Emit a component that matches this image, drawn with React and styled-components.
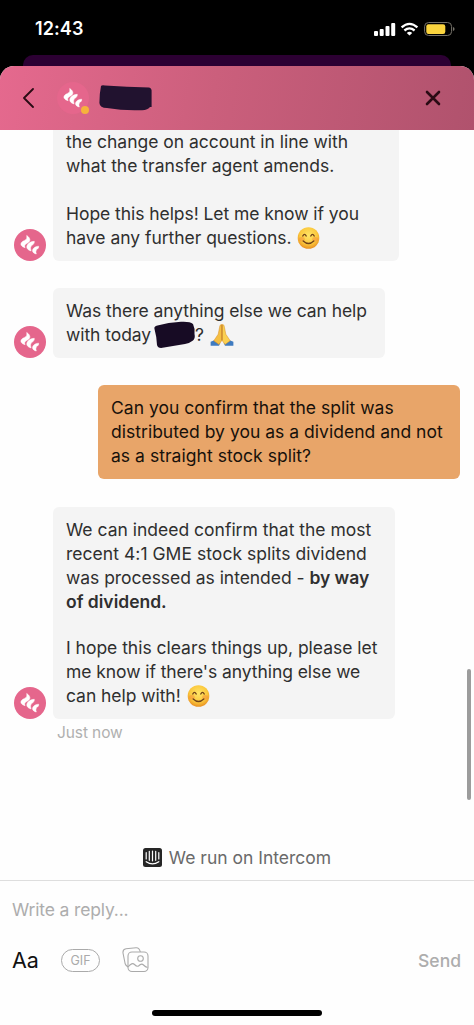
import React from 'react';
import styled, { createGlobalStyle } from 'styled-components';

const GlobalStyle = createGlobalStyle`
    * {
        box-sizing: border-box;
    }
    body {
        margin: 0;
        background: #000;
        font-family: Inter, "Liberation Sans", sans-serif;
    }
`;

const Phone = styled.div`
    display: flex;
    flex-direction: column;
    width: 474px;
    height: 1025px;
    overflow: hidden;
    background: #000;
`;

const StatusBar = styled.div`
    display: flex;
    justify-content: space-between;
    align-items: center;
    height: 55px;
    padding: 2px 19px 0 35px;
    color: #fff;
`;

const Clock = styled.span`
    font-size: 18px;
    font-weight: 600;
    letter-spacing: 0.1px;
`;

const StatusIcons = styled.svg`
    display: block;
`;

const BackSheet = styled.div`
    height: 11px;
    margin: 0 23px;
    border-radius: 10px 10px 0 0;
    background: #2c0033;
`;

const Sheet = styled.div`
    display: flex;
    flex-direction: column;
    flex: 1;
    min-height: 0;
    border-radius: 14px 14px 0 0;
    overflow: hidden;
    background: #fefefe;
`;

const Header = styled.div`
    display: flex;
    align-items: center;
    height: 64px;
    padding: 0 33px 0 22px;
    background: linear-gradient(100deg, #e5698e 0%, #cb5f7c 45%, #b0526d 100%);
`;

const HeaderAvatar = styled.div`
    position: relative;
    width: 32px;
    height: 32px;
    margin: 0 9px 0 21px;
`;

const OnlineDot = styled.span`
    position: absolute;
    right: 0;
    bottom: 0;
    width: 8px;
    height: 8px;
    border-radius: 50%;
    background: #f6b23c;
`;

const Spacer = styled.div`
    flex: 1;
`;

const Conversation = styled.div`
    position: relative;
    display: flex;
    flex-direction: column;
    height: 751px;
    border-bottom: 1px solid #dedede;
`;

const Row = styled.div`
    display: flex;
    align-items: flex-end;
    gap: 7px;
    justify-content: ${({ $mine }) => ($mine ? 'flex-end' : 'flex-start')};
    padding: 0 14px;
    margin-bottom: ${({ $gap }) => $gap || 27}px;
`;

const Bubble = styled.div`
    width: ${({ $width }) => $width}px;
    padding: ${({ $cut }) => ($cut ? '0 13px 11px' : '11px 13px')};
    border-radius: ${({ $cut }) => ($cut ? '0 0 6px 6px' : '6px')};
    background: ${({ $mine }) => ($mine ? '#e8a569' : '#f4f4f4')};
    color: ${({ $mine }) => ($mine ? '#17110b' : '#2f2f2f')};
    font-size: 17.5px;
    line-height: 24px;
`;

const Line = styled.div`
    display: flex;
    align-items: center;
    height: 24px;
    white-space: pre;
    letter-spacing: ${({ $ls }) => $ls || 0}px;
`;

const Blank = styled.div`
    height: ${({ $h }) => $h}px;
`;

const Strong = styled.b`
    font-weight: 600;
`;

const Time = styled.div`
    padding-left: 57px;
    color: #b0b0b0;
    font-size: 15.5px;
    letter-spacing: -0.1px;
    line-height: 20px;
`;

const Scrollbar = styled.div`
    position: absolute;
    right: 3px;
    top: 539px;
    width: 4px;
    height: 131px;
    border-radius: 2px;
    background: #9c9c9c;
`;

const Branding = styled.div`
    display: flex;
    justify-content: center;
    align-items: center;
    gap: 7px;
    margin-top: auto;
    height: 46px;
    color: #6a6a6a;
    font-size: 17.5px;
`;

const Composer = styled.div`
    display: flex;
    flex-direction: column;
    flex: 1;
    padding: 17px 12px 0;
`;

const Placeholder = styled.div`
    color: #adadad;
    font-size: 17.5px;
    letter-spacing: -0.15px;
    line-height: 24px;
`;

const Toolbar = styled.div`
    display: flex;
    align-items: center;
    height: 40px;
    margin-top: 18px;
`;

const TextStyle = styled.span`
    width: 49px;
    color: #111;
    font-size: 21.5px;
`;

const Gif = styled.span`
    display: flex;
    align-items: center;
    justify-content: center;
    width: 39px;
    height: 23px;
    margin-right: 22px;
    border: 1px solid #aaa;
    border-radius: 12px;
    color: #aaa;
    font-size: 12.5px;
`;

const Send = styled.span`
    padding-right: 1px;
    color: #adadad;
    font-size: 17.5px;
    font-weight: 500;
`;

const HomeBar = styled.div`
    width: 170px;
    height: 6px;
    margin: 30px auto 0;
    border-radius: 3px;
    background: #000;
`;

const Logo = ({ color }) => (
    <svg width="32" height="32" viewBox="0 0 32 32">
        <circle cx="16" cy="16" r="16" fill={color} />
        <g fill="#fff" stroke="#fff" strokeWidth="0.5" strokeLinejoin="round">
            <path d="M12.700 6.500C15.500 8.200 17 11 14.900 13C13.300 14.500 11.200 15 10.800 16.300Q10.500 17.300 11.100 18.700C7.500 17.800 6.200 15.600 7.300 13.700C8.500 11.700 12 11.500 12.700 9.400Q13 8.200 12.700 6.500z" />
            <path d="M20.300 12.300Q20.700 14.900 18.700 15.800C16.500 17 16.100 18.800 17.100 21.900C13.200 21 12 18.400 13.300 16C14.600 13.700 17.200 12.500 20.300 12.300z" />
            <path d="M24.700 17.200Q24.900 19.300 23.400 20.100C21.700 21.100 21.600 22.600 22.300 25C18.900 24.200 17.900 22.100 18.900 20.200C20 18.200 22.200 17.300 24.700 17.200z" />
        </g>
    </svg>
);

const EmojiSvg = styled.svg`
    flex: none;
    margin-left: ${({ $left }) => $left || 0}px;
`;

const Smile = () => (
    <EmojiSvg $left={1} width="23" height="23" viewBox="0 0 23 23">
        <defs>
            <radialGradient id="face" cx="50%" cy="38%" r="62%">
                <stop offset="0" stopColor="#ffe566" />
                <stop offset="0.65" stopColor="#fbc83d" />
                <stop offset="1" stopColor="#e99021" />
            </radialGradient>
        </defs>
        <circle cx="11.500" cy="11" r="10.800" fill="url(#face)" />
        <ellipse cx="4.800" cy="12.300" rx="3" ry="2.200" fill="#f58a3c" opacity="0.45" />
        <ellipse cx="18.200" cy="12.300" rx="3" ry="2.200" fill="#f58a3c" opacity="0.45" />
        <g fill="none" stroke="#70421a" strokeWidth="1.400" strokeLinecap="round">
            <path d="M5.800 9q1.700-3.200 3.400 0" />
            <path d="M13.800 9q1.700-3.200 3.400 0" />
            <path d="M6.200 13.900q5.300 5 10.600 0" />
        </g>
    </EmojiSvg>
);

const Pray = () => (
    <EmojiSvg $left={1} width="24" height="24" viewBox="0 0 24 24">
        <path d="M.6 18.800l5-2l4.700 3.300l-1.300 2.700H.6z" fill="#3f7bc0" />
        <path d="M23.400 18.800l-5-2l-4.700 3.300l1.300 2.700h8.400z" fill="#3f7bc0" />
        <path d="M11.800 1.500c-1.400-.3-2 1-2.200 2.700l-1.400 7l-4.400 6.600l5.200 3.700l2.800-4z" fill="#f5bf42" stroke="#d88d20" strokeWidth=".5" />
        <path d="M12.200 1.500c1.400-.3 2 1 2.200 2.700l1.400 7l4.400 6.600l-5.200 3.700l-2.800-4z" fill="#fbd051" stroke="#d88d20" strokeWidth=".5" />
        <path d="M12 2v15.500" stroke="#b87016" strokeWidth=".8" />
    </EmojiSvg>
);

const NameScribble = () => (
    <svg width="55" height="28" viewBox="0 0 55 28">
        <path d="M3 2Q4 .8 7 1.500L29 2.800L51 3.500Q54 4 53.600 8V23H52Q50 26 44 26.200Q26 27 9 24Q1.800 24 1.400 19Q1.500 9 3 2z" fill="#21122f" />
    </svg>
);

// sits over the text, so it is pulled into the surrounding spaces
const InlineScribble = styled.svg`
    flex: none;
    margin: 0 -2px 0 -3px;
`;

const RedactedName = () => (
    <InlineScribble width="44" height="28" viewBox="0 0 44 28">
        <path d="M1.500 8Q.5 5.500 4.500 4.500Q15 1.500 28 .8Q37 .3 40 3Q42 7 41.500 13Q42.500 17 40 19.500Q37 22 32 23L11 26.500Q5 28 4 24Q3.500 15 1.500 8z" fill="#170b24" />
    </InlineScribble>
);

export default function App() {
    return (
        <Phone>
            <GlobalStyle />
            <StatusBar>
                <Clock>12:43</Clock>
                <StatusIcons width="82" height="16" viewBox="0 0 82 16">
                    <g fill="#fff">
                        <rect x="1" y="10" width="4" height="5" rx="1" />
                        <rect x="6.700" y="8" width="4" height="7" rx="1" />
                        <rect x="12.500" y="5" width="4" height="10" rx="1" />
                        <rect x="18.200" y="2" width="4" height="13" rx="1" />
                        <path d="M36.500 14.600l-2.700-2.700q2.700-2.200 5.400 0z" />
                    </g>
                    <g fill="none" stroke="#fff" strokeWidth="2.300">
                        <path d="M28.600 6.300q7.900-6.900 15.800 0" />
                        <path d="M31.400 9.500q5.100-4.300 10.200 0" />
                    </g>
                    <rect x="51.600" y="1.500" width="27" height="13" rx="4" fill="none" stroke="#77736a" />
                    <rect x="53.300" y="3.200" width="19" height="9.700" rx="2.200" fill="#fbd43e" />
                    <path d="M80 6v4q1.600-.7 1.600-2t-1.600-2z" fill="#77736a" />
                </StatusIcons>
            </StatusBar>
            <BackSheet />
            <Sheet>
                <Header>
                    <svg width="14" height="20" viewBox="0 0 14 20">
                        <path d="M11 1L2 10l9 9" fill="none" stroke="#2a0b14" strokeWidth="1.800" strokeLinecap="round" strokeLinejoin="round" />
                    </svg>
                    <HeaderAvatar>
                        <Logo color="#e5668c" />
                        <OnlineDot />
                    </HeaderAvatar>
                    <NameScribble />
                    <Spacer />
                    <svg width="16" height="16" viewBox="0 0 16 16">
                        <path d="M2 2l12 12M14 2L2 14" stroke="#2a0b14" strokeWidth="2.600" strokeLinecap="round" />
                    </svg>
                </Header>
                <Conversation>
                    <Row>
                        <Logo color="#e5668c" />
                        <Bubble $width={346} $cut>
                            <Line $ls={-0.03}>the change on account in line with</Line>
                            <Line>what the transfer agent amends.</Line>
                            <Blank $h={24} />
                            <Line $ls={-0.06}>Hope this helps! Let me know if you</Line>
                            <Line $ls={-0.03}>have any further questions. <Smile /></Line>
                        </Bubble>
                    </Row>
                    <Row>
                        <Logo color="#e5668c" />
                        <Bubble $width={332}>
                            <Line $ls={-0.06}>Was there anything else we can help</Line>
                            <Line $ls={-0.06}>with today <RedactedName />? <Pray /></Line>
                        </Bubble>
                    </Row>
                    <Row $mine $gap={28}>
                        <Bubble $width={362} $mine>
                            <Line $ls={0.02}>Can you confirm that the split was</Line>
                            <Line $ls={0.02}>distributed by you as a dividend and not</Line>
                            <Line $ls={0.04}>as a straight stock split?</Line>
                        </Bubble>
                    </Row>
                    <Row $gap={4}>
                        <Logo color="#e5668c" />
                        <Bubble $width={342}>
                            <Line>We can indeed confirm that the most</Line>
                            <Line $ls={0.04}>recent 4:1 GME stock splits dividend</Line>
                            <Line $ls={-0.04}>was processed as intended - <Strong>by way</Strong></Line>
                            <Line><Strong>of dividend.</Strong></Line>
                            <Blank $h={22} />
                            <Line $ls={-0.02}>I hope this clears things up, please let</Line>
                            <Line $ls={-0.07}>me know if there's anything else we</Line>
                            <Line $ls={-0.05}>can help with! <Smile /></Line>
                        </Bubble>
                    </Row>
                    <Time>Just now</Time>
                    <Branding>
                        <svg width="19" height="19" viewBox="0 0 19 19">
                            <rect width="19" height="19" rx="2.500" fill="#262626" />
                            <path d="M3.200 4.500v6.500M6.300 3.300v9M9.500 3v9.800M12.700 3.300v9M15.800 4.500v6.500M3.200 13.700q6.300 4.500 12.600 0" fill="none" stroke="#fff" strokeWidth="1.200" strokeLinecap="round" />
                        </svg>
                        We run on Intercom
                    </Branding>
                    <Scrollbar />
                </Conversation>
                <Composer>
                    <Placeholder>Write a reply...</Placeholder>
                    <Toolbar>
                        <TextStyle>Aa</TextStyle>
                        <Gif>GIF</Gif>
                        <svg width="27" height="26" viewBox="0 0 27 26" fill="none" stroke="#aaa" strokeWidth="1.100">
                            <rect x="6" y="5" width="20" height="19.500" rx="4" />
                            <path d="M6 20L3.800 18Q3 17 2.600 14L1 6Q.6 2.500 4 1.800L14 .7Q17.500.5 18.300 5" />
                            <circle cx="18.500" cy="11.500" r="2.800" />
                            <path d="M6 20q4-5 6.500-2.500t4 1.500q3-3 5-1t4 2.500" />
                        </svg>
                        <Spacer />
                        <Send>Send</Send>
                    </Toolbar>
                    <HomeBar />
                </Composer>
            </Sheet>
        </Phone>
    );
}
